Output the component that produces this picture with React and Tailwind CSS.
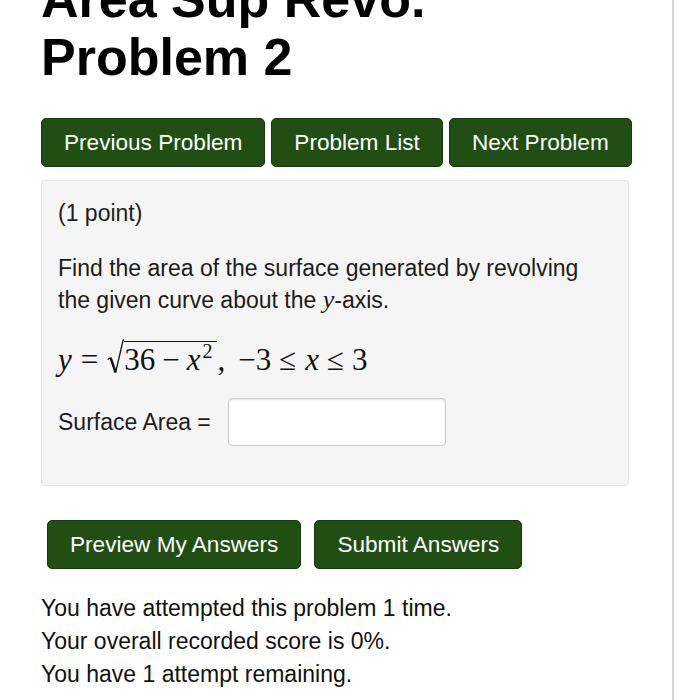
import React from "react";

const sans = { fontFamily: '"Liberation Sans", Arial, sans-serif' };
const serif = { fontFamily: '"Liberation Serif", "Times New Roman", serif' };

const GreenButton = ({ children, className = "" }) => (
  <button
    className={`bg-[#214f13] border border-[#173a0c] text-white rounded-[5px] text-[22.6px] leading-[25px] py-[11px] px-[22px] ${className}`}
    style={sans}
  >
    {children}
  </button>
);

// radical sign + overlined radicand
const Sqrt = ({ children }) => (
  <>
    <svg width="17" height="35" viewBox="0 0 17 35" className="inline-block align-[-4px]">
      <path d="M0.5 20.5 L3.6 18.7" fill="none" stroke="#111" strokeWidth="1.2" />
      <path d="M3.6 18.7 L8.6 33.5" fill="none" stroke="#111" strokeWidth="2.4" />
      <path d="M8.6 33.5 L16.2 0.8 L17 0.8" fill="none" stroke="#111" strokeWidth="1.3" />
    </svg>
    <span className="inline-block border-t-[1.5px] border-[#111] pt-[4px] leading-[28px] pr-[4px]">
      {children}
    </span>
  </>
);

const MathLine = () => (
  <div className="text-[31px] leading-[34px] text-[#111] whitespace-nowrap" style={serif}>
    <i>y</i>
    <span className="ml-[9px]">=</span>
    <span className="ml-[9px]" />
    <Sqrt>
      36<span className="mx-[7px]">−</span>
      <i>x</i>
      <sup className="text-[20px] ml-[2px] top-[-0.6em]">2</sup>
    </Sqrt>
    <span className="ml-[1px]">,</span>
    <span className="ml-[13px]">−3</span>
    <span className="ml-[8px]">≤</span>
    <i className="ml-[9px]">x</i>
    <span className="ml-[8px]">≤</span>
    <span className="ml-[8px]">3</span>
  </div>
);

export default function App() {
  return (
    <div className="w-[675px] h-[700px] overflow-hidden bg-white text-[#1c1c1c]" style={sans}>
      <div className="flow-root w-[674px] h-full border-r-2 border-[#d6d6d6] pl-[41px]">
        <h1 className="mt-[-30px] text-[52px] leading-[58px] font-bold text-black">
          Area Sup Revo.
          <br />
          Problem 2
        </h1>

        <div className="flex gap-[6px] mt-[32px]">
          <GreenButton>Previous Problem</GreenButton>
          <GreenButton>Problem List</GreenButton>
          <GreenButton>Next Problem</GreenButton>
        </div>

        <div className="mt-[13px] w-[588px] bg-[#f5f5f5] border border-[#e3e3e3] rounded-[4px] pl-[16px] pt-[16px] pb-[39px] text-[23px] leading-[32px]">
          <p>(1 point)</p>
          <p className="mt-[23px]">
            Find the area of the surface generated by revolving
            <br />
            the given curve about the{" "}
            <i style={serif} className="text-[26px]">y</i>-axis.
          </p>
          <div className="mt-[23px]">
            <MathLine />
          </div>
          <div className="mt-[21px] flex items-center h-[48px]">
            <span>Surface Area =</span>
            <input
              type="text"
              className="ml-[17px] w-[218px] h-[48px] bg-white border border-[#cccccc] rounded-[4px] shadow-[inset_0_1px_2px_rgba(0,0,0,0.12)] outline-none"
            />
          </div>
        </div>

        <div className="flex gap-[13px] mt-[34px] ml-[6px]">
          <GreenButton>Preview My Answers</GreenButton>
          <GreenButton>Submit Answers</GreenButton>
        </div>

        <div className="mt-[23px] text-[23px] leading-[33px] text-[#111]">
          <p>You have attempted this problem 1 time.</p>
          <p>Your overall recorded score is 0%.</p>
          <p>You have 1 attempt remaining.</p>
        </div>
      </div>
    </div>
  );
}
